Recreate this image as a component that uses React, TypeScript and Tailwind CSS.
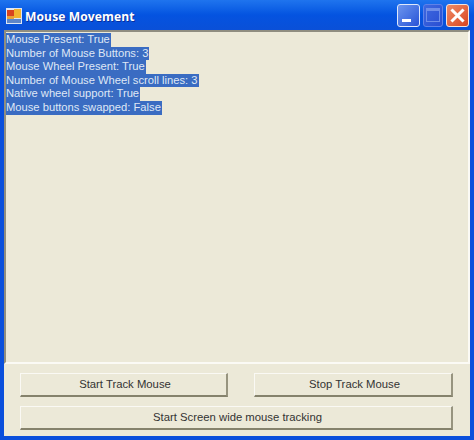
const lines = [
  "Mouse Present: True",
  "Number of Mouse Buttons: 3",
  "Mouse Wheel Present: True",
  "Number of Mouse Wheel scroll lines: 3",
  "Native wheel support: True",
  "Mouse buttons swapped: False",
];

function XpButton({ label, className }: { label: string; className: string }) {
  return (
    <button className={`h-[24px] pl-[3px] bg-[#ece9d8] border border-t-[#faf9f4] border-l-[#faf9f4] border-r-[#97947f] border-b-[#85826c] border-b-2 border-r-2 text-[11.3px] text-[#333] leading-none ${className}`}>
      {label}
    </button>
  );
}

export default function App() {
  return (
    <div className="w-[474px] h-[440px] flex flex-col bg-[#0a4fdc] font-['Liberation_Sans',sans-serif] overflow-hidden">
      {/* Title bar */}
      <div className="h-[30px] shrink-0 flex items-center pl-[6px] pr-[5px] bg-gradient-to-b from-[#1f74ee] via-[#0453e0] to-[#0a50d8]">
        <svg width="16" height="16" viewBox="0 0 16 16" className="shrink-0 mt-[1px]">
          <rect width="16" height="16" fill="#dfe6f2" />
          <rect x="1" y="2" width="7" height="6" fill="#d8431f" />
          <rect x="8" y="1" width="7" height="9" fill="#f2b431" />
          <rect x="1" y="8" width="7" height="3" fill="#e9a13a" />
          <rect x="1" y="11" width="14" height="4" fill="#5f86c8" />
        </svg>
        <span className="ml-[3px] mt-[4px] text-white font-bold text-[12.1px] font-['Open_Sans',sans-serif] tracking-[0.1px] [text-shadow:1px_1px_0_#0a2f9c]">
          Mouse Movement
        </span>
        <div className="ml-auto flex gap-[3px]">
          <div className="w-[23px] h-[23px] rounded-[3px] border border-[#dfe8fb] bg-gradient-to-br from-[#6d95ee] to-[#2a52d6] flex items-end pl-[4px] pb-[4px]">
            <div className="w-[9px] h-[3px] bg-white" />
          </div>
          <div className="w-[20px] h-[23px] rounded-[3px] border border-[#5f82e8] bg-gradient-to-br from-[#3f68e0] to-[#2a4fd2] flex items-center justify-center">
            <div className="w-[14px] h-[14px] border border-[#6f8ee8] border-t-[3px]" />
          </div>
          <div className="w-[23px] h-[23px] rounded-[3px] border border-[#f3e3dc] bg-gradient-to-br from-[#ee8b66] to-[#d8421c] flex items-center justify-center">
            <svg width="15" height="15" viewBox="0 0 15 15">
              <path d="M2.5 2.5 L12.5 12.5 M12.5 2.5 L2.5 12.5" stroke="#fff" strokeWidth="3" strokeLinecap="square" />
            </svg>
          </div>
        </div>
      </div>

      {/* Client area */}
      <div className="flex-1 mx-[4px] mb-[4px] bg-[#ece9d8] flex flex-col min-h-0">
        <div className="h-[334px] shrink-0 border-2 border-t-[#8f8d80] border-l-[#8f8d80] border-b-[#fbfaf5] border-r-[#fbfaf5] pt-[1px] text-[11.2px] leading-[13.6px]">
          <div className="flex flex-col items-start">
            {lines.map((line) => (
              <span key={line} className="bg-[#3a6cc2] text-[#dfe7f5] pr-[1px] h-[13.6px] whitespace-nowrap">
                {line}
              </span>
            ))}
          </div>
        </div>
        <div className="flex-1 pt-[9px] pl-[16px] pr-[17px] flex flex-col gap-[9px]">
          <div className="flex justify-between">
            <XpButton label="Start Track Mouse" className="w-[208px]" />
            <XpButton label="Stop Track Mouse" className="w-[199px]" />
          </div>
          <XpButton label="Start Screen wide mouse tracking" className="w-full" />
        </div>
      </div>
    </div>
  );
}
